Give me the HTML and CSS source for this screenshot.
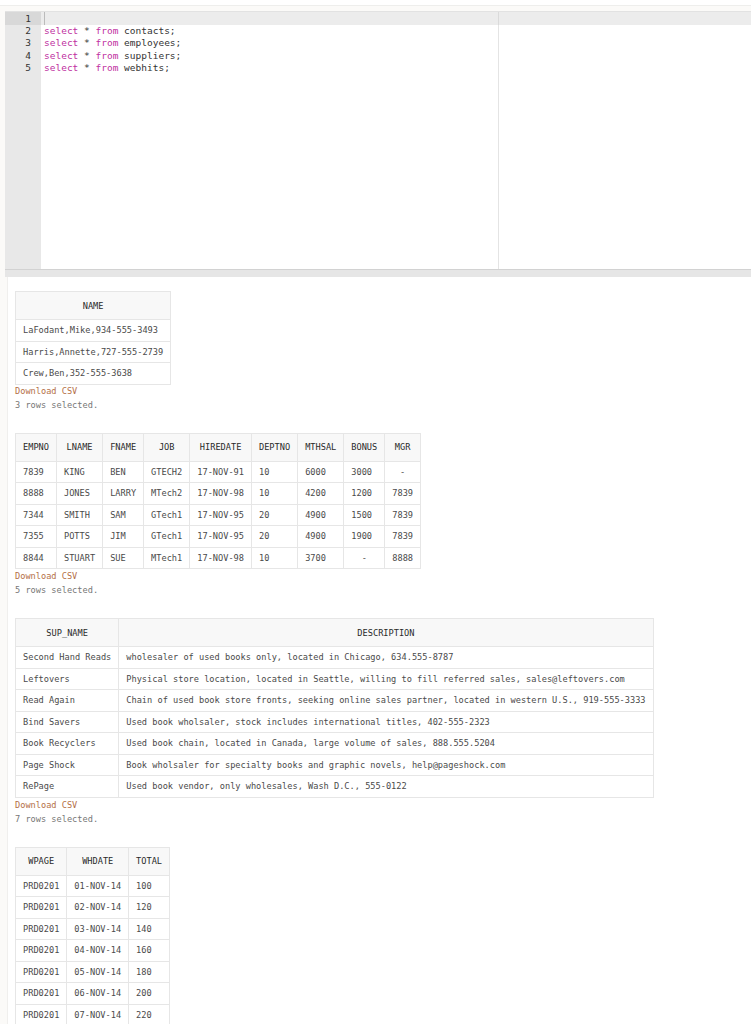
FILE: index.html
```html
<!DOCTYPE html>
<html lang="en">
<head>
<meta charset="utf-8">
<title>SQL Worksheet</title>
<link rel="stylesheet" href="styles.css">
</head>
<body>
<div class="page">
  <div class="workspace">
    <div class="editor">
      <div class="gutter">
        <div class="num active-num">1</div>
        <div class="num">2</div>
        <div class="num">3</div>
        <div class="num">4</div>
        <div class="num">5</div>
      </div>
      <div class="code">
        <div class="print-margin"></div>
        <div class="line active-line"><span class="cursor"></span></div>
        <div class="line"><span class="kw">select</span> * <span class="kw">from</span> contacts;</div>
        <div class="line"><span class="kw">select</span> * <span class="kw">from</span> employees;</div>
        <div class="line"><span class="kw">select</span> * <span class="kw">from</span> suppliers;</div>
        <div class="line"><span class="kw">select</span> * <span class="kw">from</span> webhits;</div>
      </div>
    </div>
    <div class="splitter"></div>
    <div class="results">
      <section class="result">
        <table>
          <tr><th>NAME</th></tr>
          <tr><td>LaFodant,Mike,934-555-3493</td></tr>
          <tr><td>Harris,Annette,727-555-2739</td></tr>
          <tr><td>Crew,Ben,352-555-3638</td></tr>
        </table>
        <a class="csv" href="#">Download CSV</a>
        <p class="count">3 rows selected.</p>
      </section>
      <section class="result">
        <table>
          <tr><th>EMPNO</th><th>LNAME</th><th>FNAME</th><th>JOB</th><th>HIREDATE</th><th>DEPTNO</th><th>MTHSAL</th><th>BONUS</th><th>MGR</th></tr>
          <tr><td>7839</td><td>KING</td><td>BEN</td><td>GTECH2</td><td>17-NOV-91</td><td>10</td><td>6000</td><td>3000</td><td class="null">-</td></tr>
          <tr><td>8888</td><td>JONES</td><td>LARRY</td><td>MTech2</td><td>17-NOV-98</td><td>10</td><td>4200</td><td>1200</td><td>7839</td></tr>
          <tr><td>7344</td><td>SMITH</td><td>SAM</td><td>GTech1</td><td>17-NOV-95</td><td>20</td><td>4900</td><td>1500</td><td>7839</td></tr>
          <tr><td>7355</td><td>POTTS</td><td>JIM</td><td>GTech1</td><td>17-NOV-95</td><td>20</td><td>4900</td><td>1900</td><td>7839</td></tr>
          <tr><td>8844</td><td>STUART</td><td>SUE</td><td>MTech1</td><td>17-NOV-98</td><td>10</td><td>3700</td><td class="null">-</td><td>8888</td></tr>
        </table>
        <a class="csv" href="#">Download CSV</a>
        <p class="count">5 rows selected.</p>
      </section>
      <section class="result">
        <table>
          <tr><th>SUP_NAME</th><th>DESCRIPTION</th></tr>
          <tr><td>Second Hand Reads</td><td>wholesaler of used books only, located in Chicago, 634.555-8787</td></tr>
          <tr><td>Leftovers</td><td>Physical store location, located in Seattle, willing to fill referred sales, sales@leftovers.com</td></tr>
          <tr><td>Read Again</td><td>Chain of used book store fronts, seeking online sales partner, located in western U.S., 919-555-3333</td></tr>
          <tr><td>Bind Savers</td><td>Used book wholsaler, stock includes international titles, 402-555-2323</td></tr>
          <tr><td>Book Recyclers</td><td>Used book chain, located in Canada, large volume of sales, 888.555.5204</td></tr>
          <tr><td>Page Shock</td><td>Book wholsaler for specialty books and graphic novels, help@pageshock.com</td></tr>
          <tr><td>RePage</td><td>Used book vendor, only wholesales, Wash D.C., 555-0122</td></tr>
        </table>
        <a class="csv" href="#">Download CSV</a>
        <p class="count">7 rows selected.</p>
      </section>
      <section class="result">
        <table>
          <tr><th>WPAGE</th><th>WHDATE</th><th>TOTAL</th></tr>
          <tr><td>PRD0201</td><td>01-NOV-14</td><td>100</td></tr>
          <tr><td>PRD0201</td><td>02-NOV-14</td><td>120</td></tr>
          <tr><td>PRD0201</td><td>03-NOV-14</td><td>140</td></tr>
          <tr><td>PRD0201</td><td>04-NOV-14</td><td>160</td></tr>
          <tr><td>PRD0201</td><td>05-NOV-14</td><td>180</td></tr>
          <tr><td>PRD0201</td><td>06-NOV-14</td><td>200</td></tr>
          <tr><td>PRD0201</td><td>07-NOV-14</td><td>220</td></tr>
        </table>
      </section>
    </div>
  </div>
</div>
</body>
</html>
```
FILE: styles.css
```css
html, body {
  margin: 0;
  padding: 0;
  background: #fff;
}
.page {
  height: 1024px;
  overflow: hidden;
  padding-top: 5px;
  box-sizing: border-box;
  font-family: "DejaVu Sans Mono", "Liberation Mono", monospace;
}
.workspace {
  border-top: 1px solid #eeeeec;
  background: #fbfaf8;
  padding-top: 6px;
}
.editor {
  display: flex;
  height: 257px;
  margin-left: 5px;
  background: #fff;
  font-size: 9.5px;
  line-height: 12px;
  color: #333;
  box-shadow: 0 -1px 0 #e2e2e2;
}
.gutter {
  width: 36px;
  flex: none;
  background: #e8e8e8;
}
.num {
  height: 12.33px;
  padding-right: 10px;
  text-align: right;
}
.active-num {
  height: 13px;
  line-height: 13px;
  background: #d8d8d8;
}
.code {
  position: relative;
  flex: 1;
}
.print-margin {
  position: absolute;
  top: 0;
  bottom: 0;
  left: 457px;
  width: 1px;
  background: #e4e4e4;
}
.line {
  height: 12.33px;
  padding-left: 3px;
  white-space: pre;
  position: relative;
}
.active-line {
  height: 13px;
  background: rgba(200, 200, 200, 0.35);
}
.cursor {
  display: inline-block;
  width: 1px;
  height: 13px;
  background: #bbb;
  vertical-align: top;
}
.kw {
  color: #c0309f;
}
.splitter {
  height: 7px;
  margin-left: 5px;
  background: #e6e6e6;
  border-top: 1px solid #d2d2d2;
}
.results {
  margin-left: 7px;
  padding: 14px 0 0 7px;
  background: #fff;
  border-left: 1px solid #f0efed;
}
.result {
  padding-bottom: 21px;
  font-size: 8.64px;
}
.result:first-child .csv {
  margin-top: -1px;
}
table {
  border-collapse: collapse;
  color: #4a4a4a;
}
th, td {
  border: 1px solid #e6e6e6;
  padding: 0 7px;
  white-space: nowrap;
  text-align: left;
  font-weight: normal;
}
th {
  height: 27px;
  background: #f8f8f8;
  color: #2a2a2a;
  text-align: center;
}
td {
  height: 20.5px;
}
td.null {
  text-align: center;
}
.csv {
  display: block;
  line-height: 14px;
  color: #b46f47;
  text-decoration: none;
}
.count {
  margin: 0;
  line-height: 14px;
  color: #777;
}
```
